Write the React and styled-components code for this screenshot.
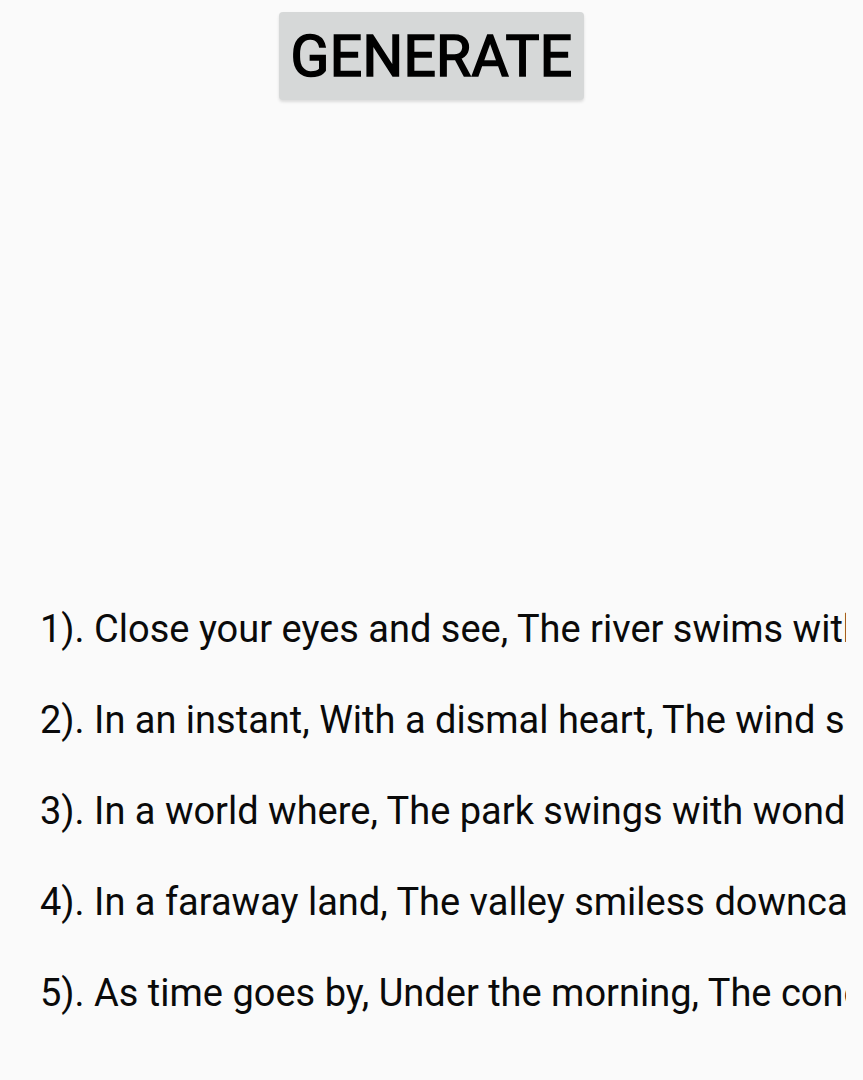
import React from 'react';
import styled, { createGlobalStyle } from 'styled-components';

const GlobalStyle = createGlobalStyle`
  html, body {
    margin: 0;
    padding: 0;
    background: #fafafa;
    font-family: Roboto, 'Liberation Sans', sans-serif;
  }
`;

const poems = [
  'Close your eyes and see, The river swims with the golden light',
  'In an instant, With a dismal heart, The wind sings a lonely song',
  'In a world where, The park swings with wonder and delight',
  'In a faraway land, The valley smiless downcast and grey',
  'As time goes by, Under the morning, The cone of light fades',
];

function App() {
  return (
    <>
      <GlobalStyle />
      <Page>
        <GenerateButton>GENERATE</GenerateButton>
        <PoemList>
          {poems.map((text, i) => (
            <PoemRow key={i}>
              {i + 1}). {text}
            </PoemRow>
          ))}
        </PoemList>
      </Page>
    </>
  );
}

const Page = styled.div`
  display: flex;
  flex-flow: column nowrap;
  align-items: center;
  min-height: 1080px;
  padding-top: 12px;
  box-sizing: border-box;
`;

// no medium weight installed, so regular + a thin stroke to fake it
const GenerateButton = styled.button`
  width: 305px;
  height: 88px;
  border: none;
  border-radius: 4px;
  background: #d6d8d8;
  color: #000;
  font-family: Roboto, 'Liberation Sans', sans-serif;
  font-size: 57px;
  font-weight: 400;
  -webkit-text-stroke: 1.6px #000;
  letter-spacing: 0.3px;
  padding: 0;
  box-shadow: 0 2px 3px rgba(0, 0, 0, 0.12);
  cursor: pointer;
`;

const PoemList = styled.ul`
  list-style: none;
  margin: 484px 0 0;
  padding: 0 17px 0 40px;
  width: 100%;
  box-sizing: border-box;
`;

const PoemRow = styled.li`
  height: 91px;
  line-height: 91px;
  font-size: 38px;
  color: #0a0a0a;
  white-space: nowrap;
  overflow: hidden;
`;

export default App;
